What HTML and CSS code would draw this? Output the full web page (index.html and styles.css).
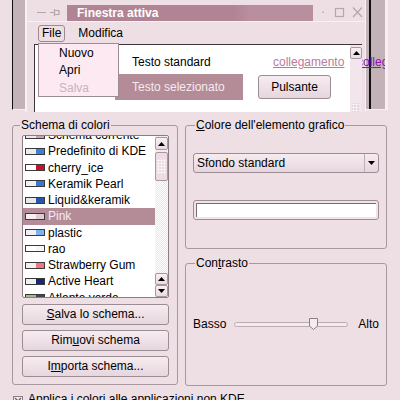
FILE: index.html
```html
<!DOCTYPE html>
<html lang="it">
<head>
<meta charset="utf-8">
<title>Colori</title>
<link rel="stylesheet" href="styles.css">
</head>
<body>
<div class="preview">
  <div class="backwin"></div>
  <div class="win">
    <div class="titlerow">
      <svg class="ticons" width="24" height="16" viewBox="0 0 24 16">
        <path d="M0 7.5H9M13 7.5H17M17.5 4V11M18 5.5H22V9.5H18" fill="none" stroke="#b5a5ad" stroke-width="1.2"/>
      </svg>
      <div class="titlebar">Finestra attiva</div>
      <svg class="tbtns" width="52" height="16" viewBox="0 0 52 16">
        <rect x="9.5" y="6.5" width="1.5" height="1.5" fill="#b5a5ad"/>
        <rect x="22.5" y="3.5" width="8" height="8" fill="none" stroke="#b5a5ad" stroke-width="1.2"/>
        <path d="M40 2.5L49 12M49 2.5L40 12" fill="none" stroke="#b5a5ad" stroke-width="1.2"/>
      </svg>
    </div>
    <div class="menubar">
      <span class="mfile">File</span>
      <span class="mitem">Modifica</span>
    </div>
    <div class="content">
      <div class="cmain">
        <div class="cgrid">
          <div class="tstd">Testo standard</div>
          <div class="link">collegamento</div>
          <div class="tsel">Testo selezionato</div>
          <div class="pbtn">Pulsante</div>
        </div>
      </div>
      <div class="csb">
        <div class="csb-up"><svg width="7" height="4" viewBox="0 0 7 4"><path d="M0 4L3.5 0L7 4Z" fill="#000"/></svg></div>
        <div class="csb-fill"></div>
        <div class="csb-grip"></div>
      </div>
    </div>
  </div>
  <div class="popup">
    <div class="pitem">Nuovo</div>
    <div class="pitem">Apri</div>
    <div class="pitem dis">Salva</div>
  </div>
  <div class="vlink"><span class="vtext">collega</span></div>
</div>

<div class="main">
  <fieldset class="group schemes">
    <legend>Schema di colori</legend>
    <div class="list">
      <div class="items">
        <div class="items-inner">
          <div class="row"><span class="sw" style="--a:#f4e6ec;--b:#c8a4b2"></span>Schema corrente</div>
          <div class="row"><span class="sw" style="--a:#ecece6;--b:#3f7fd6"></span>Predefinito di KDE</div>
          <div class="row"><span class="sw" style="--a:#ffffff;--b:#c81030"></span>cherry_ice</div>
          <div class="row"><span class="sw" style="--a:#f0f0f2;--b:#3a76d6"></span>Keramik Pearl</div>
          <div class="row"><span class="sw" style="--a:#e6e8ea;--b:#2a56aa"></span>Liquid&amp;keramik</div>
          <div class="row sel"><span class="sw" style="--a:#f8eef2;--b:#e2cad4"></span>Pink</div>
          <div class="row"><span class="sw" style="--a:#f2eef8;--b:#7eb2f0"></span>plastic</div>
          <div class="row"><span class="sw" style="--a:#ffffff;--b:#f6f6f6"></span>rao</div>
          <div class="row"><span class="sw" style="--a:#f6eeee;--b:#f07484"></span>Strawberry Gum</div>
          <div class="row"><span class="sw" style="--a:#f0f0ea;--b:#1c2676"></span>Active Heart</div>
          <div class="row"><span class="sw" style="--a:#a6b696;--b:#3e4a52"></span>Atlante verde</div>
        </div>
      </div>
      <div class="sb">
        <div class="sbtn top"><svg width="7" height="4" viewBox="0 0 7 4"><path d="M0 4L3.5 0L7 4Z" fill="#000"/></svg></div>
        <div class="thumb"><span class="grip"></span></div>
        <div class="track"></div>
        <div class="sbtn"><svg width="7" height="4" viewBox="0 0 7 4"><path d="M0 4L3.5 0L7 4Z" fill="#000"/></svg></div>
        <div class="sbtn"><svg width="7" height="4" viewBox="0 0 7 4"><path d="M0 0L3.5 4L7 0Z" fill="#000"/></svg></div>
      </div>
    </div>
    <div class="btn first"><u>S</u>alva lo schema...</div>
    <div class="btn">Rim<u>u</u>ovi schema</div>
    <div class="btn">I<u>m</u>porta schema...</div>
  </fieldset>

  <div class="right">
    <fieldset class="group g1">
      <legend><u>C</u>olore dell'elemento grafico</legend>
      <div class="combo">
        <span class="ctext">Sfondo standard</span>
        <span class="carrow"><svg width="7" height="4" viewBox="0 0 7 4"><path d="M0 0L3.5 4L7 0Z" fill="#000"/></svg></span>
      </div>
      <div class="cfield"><div class="cwhite"></div></div>
    </fieldset>
    <fieldset class="group g2">
      <legend>Con<u>t</u>rasto</legend>
      <div class="slrow">
        <span>Basso</span>
        <div class="groove">
          <svg class="handle" width="11" height="14" viewBox="0 0 11 14"><path d="M1.5 1.5H9.5V9L5.5 12.5L1.5 9Z" fill="#f6ecf0" stroke="#8e7e86" stroke-width="1"/></svg>
        </div>
        <span class="alto">Alto</span>
      </div>
    </fieldset>
  </div>
</div>

<div class="checkrow">
  <span class="cbox"><svg width="8" height="8" viewBox="0 0 8 8"><path d="M1 1L7 7M7 1L1 7" stroke="#6a5c64" stroke-width="1.3"/></svg></span>
  <span>Applica i colori alle applicazioni non KDE</span>
</div>
</body>
</html>
```

FILE: styles.css
```css
* { box-sizing: border-box; }
html, body { margin: 0; padding: 0; }
body {
  width: 400px;
  height: 400px;
  overflow: hidden;
  background: #eedfe5;
  font-family: "Liberation Sans", Arial, sans-serif;
  font-size: 12px;
  color: #000;
}

/* ---------- preview canvas ---------- */
.preview { position: relative; height: 112px; overflow: hidden; }
.backwin {
  position: absolute;
  left: 12px; top: 0;
  width: 376px; height: 110px;
  border-left: 1px solid #111;
  border-right: 3px solid #f7eff3;
  border-bottom: 1px solid #f7eff3;
  background: linear-gradient(90deg, #c3b3b9 0 356px, #111 356px 358px, #c3b3b9 358px);
}
.win {
  position: absolute;
  left: 25px; top: 0;
  width: 341px; height: 112px;
  background: #eedfe5;
  border-left: 2px solid #f8f0f4;
  border-right: 1px solid #f8f0f4;
  overflow: hidden;
}
.titlerow {
  display: flex;
  align-items: flex-start;
  height: 22px;
  padding: 5px 0 0 10px;
  border-bottom: 1px solid #f8f0f4;
}
.ticons { flex: none; }
.titlebar {
  margin-left: 6px;
  width: 246px;
  height: 16px;
  line-height: 16px;
  padding-left: 10px;
  color: #fff;
  font-weight: bold;
  background: linear-gradient(90deg, #b08494 0, #b08494 68%, #b98e9e 74%, #b98e9e 100%);
}
.tbtns { flex: none; }
.menubar {
  display: flex;
  align-items: center;
  height: 22px;
  padding-left: 11px;
}
.mfile {
  height: 17px;
  line-height: 15px;
  padding: 0 3px;
  border: 1px solid #9a8a92;
  border-radius: 3px;
}
.mitem { margin-left: 13px; }
.content {
  display: flex;
  margin-left: 7px;
  width: 328px;
  height: 70px;
  border-top: 1px solid #3e363c;
  border-left: 1px solid #3e363c;
  background: #fff;
}
.cmain { flex: 1; padding: 9px 0 0 80px; }
.cgrid {
  display: grid;
  grid-template-columns: 128px 1fr;
  grid-template-rows: 16px 26px;
  column-gap: 15px;
  row-gap: 4px;
}
.tstd { padding-left: 17px; line-height: 16px; white-space: nowrap; }
.link {
  padding-left: 15px;
  line-height: 16px;
  color: #b87c9a;
  text-decoration: underline;
}
.tsel {
  background: #b48c98;
  color: #f6eaef;
  padding-left: 17px;
  line-height: 26px;
  white-space: nowrap;
}
.pbtn {
  align-self: center;
  width: 73px;
  height: 24px;
  line-height: 22px;
  text-align: center;
  border: 1px solid #9c8c94;
  border-radius: 3px;
  background: linear-gradient(#f6ecf0, #e6d6de);
}
.csb {
  width: 12px;
  display: flex;
  flex-direction: column;
  background: #f2e6ec;
}
.csb-up {
  margin-top: 2px;
  height: 12px;
  border: 1px solid #a8989f;
  border-radius: 2px;
  background: linear-gradient(#f8f0f4, #eadbe2);
  display: flex;
  align-items: center;
  justify-content: center;
}
.csb-fill { flex: 1; }
.csb-grip {
  margin: 0 0 2px 2px;
  width: 7px;
  height: 9px;
  background: radial-gradient(circle, #ffffff 0.9px, transparent 1.1px) 0 0 / 3px 3px, #e6d6de;
}
.popup {
  position: absolute;
  left: 38px; top: 43px;
  width: 81px; height: 54px;
  background: #fde9f1;
  border: 1px solid #9c8c94;
  padding-top: 1px;
}
.pitem { padding-left: 20px; line-height: 17.3px; }
.pitem.dis { color: #c9b2be; }
.vlink {
  position: absolute;
  left: 362px; top: 54px;
  width: 23px;
  overflow: hidden;
  line-height: 16px;
  white-space: nowrap;
}
.vtext {
  display: inline-block;
  margin-left: -5px;
  color: #8a10a8;
  text-decoration: underline;
}

/* ---------- dialog ---------- */
.main {
  display: flex;
  gap: 7px;
  padding: 6px 13px 0 12px;
}
.group {
  margin: 0;
  border: 1px solid #a8979f;
  border-radius: 3px;
  min-width: 0;
}
legend {
  padding: 0 1px;
  line-height: 14px;
}
.schemes {
  width: 166px;
  height: 267px;
  padding: 3px 8px 6px 9px;
}
.schemes legend { margin-left: -2px; }
.list {
  width: 147px;
  height: 163px;
  border: 1px solid #8c7c84;
  border-radius: 2px;
  background: #fff;
  display: flex;
  overflow: hidden;
}
.items { flex: 1; overflow: hidden; }
.items-inner { margin-top: -9px; }
.row {
  height: 16.25px;
  display: flex;
  align-items: center;
  gap: 3px;
  padding-left: 2px;
  white-space: nowrap;
}
.row.sel { background: #b48c98; color: #f6eaef; }
.sw {
  flex: none;
  width: 20px;
  height: 7px;
  border: 1px solid #3a3a3a;
  background: linear-gradient(90deg, var(--a) 0 58%, var(--b) 58% 100%);
}
.sb {
  width: 13px;
  display: flex;
  flex-direction: column;
  background: #f4eaef;
}
.sbtn {
  height: 12px;
  border: 1px solid #a8989f;
  border-radius: 2px;
  background: linear-gradient(#f8f0f4, #eadbe2);
  display: flex;
  align-items: center;
  justify-content: center;
}
.sbtn.top { margin-top: 1px; height: 13px; }
.thumb {
  margin-top: 2px;
  height: 29px;
  border: 1px solid #a8989f;
  border-radius: 2px;
  background: #eedce4;
  display: flex;
  align-items: center;
  justify-content: center;
}
.grip {
  width: 9px;
  height: 15px;
  background: radial-gradient(circle, #ffffff 0.9px, transparent 1.1px) 0 0 / 3px 3px;
}
.track {
  flex: 1;
  background: repeating-conic-gradient(#f1e2e9 0 25%, #ffffff 0 50%) 0 0 / 2px 2px;
}
.btn {
  height: 21px;
  margin-top: 5px;
  line-height: 19px;
  text-align: center;
  border: 1px solid #9c8c94;
  border-radius: 3px;
  background: linear-gradient(#f6ecf0, #e6d6de);
}
.btn.first { margin-top: 6px; }

.right {
  width: 202px;
  display: flex;
  flex-direction: column;
  gap: 7px;
}
.g1, .g2 { padding: 0 7px; }
.g1 legend, .g2 legend { margin-left: 2px; }
.g1 { height: 131px; }
.g2 { height: 130px; }
.combo {
  margin-top: 21px;
  height: 20px;
  display: flex;
  border: 1px solid #9c8c94;
  border-radius: 3px;
  background: linear-gradient(#f6ecf0, #e6d6de);
}
.ctext { flex: 1; padding-left: 3px; line-height: 18px; }
.carrow {
  width: 14px;
  border-left: 1px solid #c0aeb6;
  display: flex;
  align-items: center;
  justify-content: center;
}
.cfield {
  margin-top: 27px;
  height: 20px;
  border: 1px solid #9c8c94;
  border-radius: 3px;
  padding: 2px 2px 2px 2px;
  background: #f0e4ea;
}
.cwhite {
  height: 100%;
  background: #fff;
  border-top: 1px solid #7a6c74;
  border-left: 1px solid #7a6c74;
}
.slrow {
  margin-top: 46px;
  height: 16px;
  display: flex;
  align-items: center;
}
.groove {
  position: relative;
  margin-left: 8px;
  width: 115px;
  height: 5px;
  border: 1px solid #bcacb4;
  border-radius: 3px;
  background: #f4eaef;
}
.handle { position: absolute; left: 73px; top: -6px; }
.alto { margin-left: 10px; }

.checkrow {
  display: flex;
  align-items: flex-start;
  gap: 5px;
  margin-top: 6px;
  padding-left: 13px;
  line-height: 14px;
  white-space: nowrap;
}
.cbox {
  margin-top: 4px;
  width: 10px;
  height: 10px;
  border: 1px solid #8c7c84;
  background: #f6ecf0;
  display: flex;
  align-items: center;
  justify-content: center;
}
```
